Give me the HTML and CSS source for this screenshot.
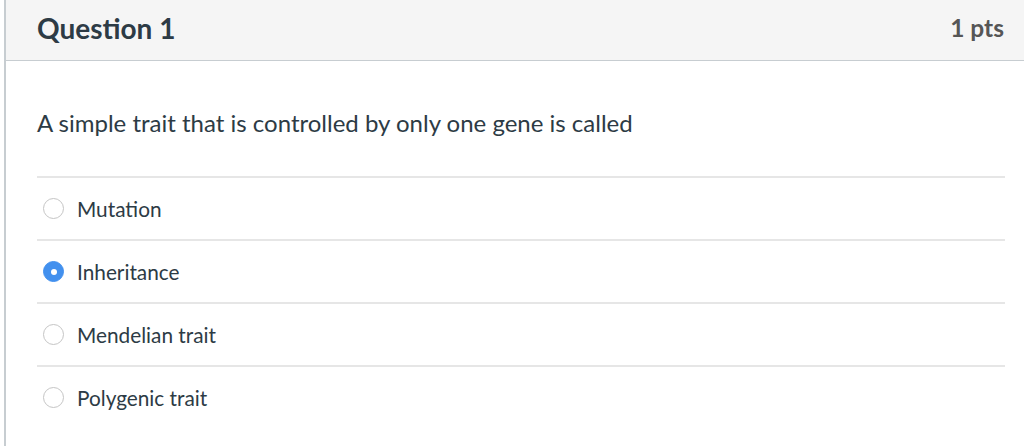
FILE: index.html
```html
<!DOCTYPE html>
<html>
<head>
<meta charset="utf-8">
<link rel="stylesheet" href="styles.css">
</head>
<body>
<div class="question">
  <div class="header">
    <h2 class="title">Question 1</h2>
    <span class="pts">1 pts</span>
  </div>
  <div class="content">
    <p class="text">A simple trait that is controlled by only one gene is called</p>
    <div class="answers">
      <label class="answer"><span class="radio"></span><span class="label">Mutation</span></label>
      <label class="answer"><span class="radio checked"></span><span class="label">Inheritance</span></label>
      <label class="answer"><span class="radio"></span><span class="label">Mendelian trait</span></label>
      <label class="answer"><span class="radio"></span><span class="label">Polygenic trait</span></label>
    </div>
  </div>
</div>
</body>
</html>
```

FILE: styles.css
```css
html, body {
  margin: 0;
  padding: 0;
  background: #fff;
}
body {
  font-family: Lato, "Open Sans", sans-serif;
  color: #2d3b45;
  height: 446px;
  overflow: hidden;
}
.question {
  margin-left: 4px;
  border-left: 2px solid #c7cdd1;
  height: 446px;
}
.header {
  height: 60px;
  background: #f5f5f5;
  border-bottom: 1px solid #c7cdd1;
  display: flex;
  align-items: center;
  justify-content: space-between;
  padding: 0 20px 0 31px;
}
.title {
  margin: 0;
  font-size: 28px;
  line-height: 34px;
  font-weight: 700;
  color: #2d3b45;
  position: relative;
  top: -2px;
}
.pts {
  font-size: 24.5px;
  line-height: 30px;
  font-weight: 700;
  color: #565656;
  position: relative;
  top: -2px;
}
.content {
  padding: 0 19px 0 31px;
}
.text {
  margin: 0;
  padding: 46px 0 37px;
  font-size: 24px;
  line-height: 32px;
}
.answers {
  display: flex;
  flex-direction: column;
}
.answer {
  display: flex;
  align-items: center;
  height: 61px;
  border-top: 2px solid #e6e6e6;
  font-size: 20.8px;
}
.radio {
  box-sizing: border-box;
  width: 21px;
  height: 21px;
  border-radius: 50%;
  border: 1px solid #c5c5c5;
  background: #fff;
  margin-left: 6px;
  margin-right: 13px;
  position: relative;
}
.radio.checked {
  background: #4290ee;
  border-color: #4290ee;
}
.radio.checked::after {
  content: "";
  position: absolute;
  left: 50%;
  top: 50%;
  width: 6px;
  height: 6px;
  margin: -3px 0 0 -3px;
  background: #fff;
  border-radius: 50%;
}
```
